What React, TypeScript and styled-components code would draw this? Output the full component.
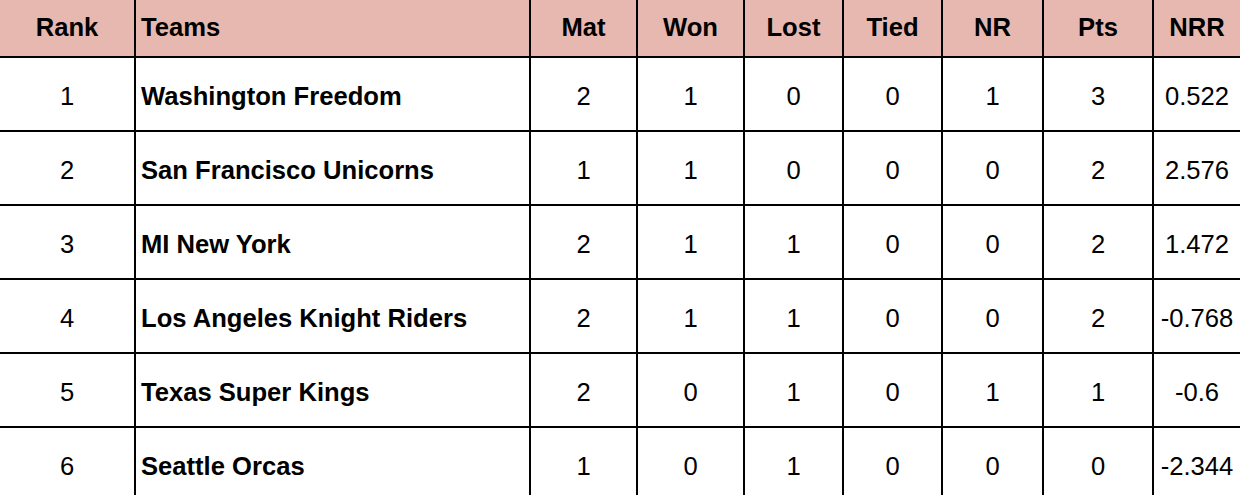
import React from "react";
import styled, { createGlobalStyle, css } from "styled-components";

const Global = createGlobalStyle`
  html, body { margin: 0; padding: 0; background: #ffffff; }
  body { font-family: "Liberation Sans", Arial, sans-serif; color: #000; }
`;

const COLS = "136px 395px 107px 107px 99px 99px 101px 110px 86px";

const Table = styled.div`
  width: 1240px;
  height: 495px;
  overflow: hidden;
  display: grid;
  grid-template-columns: ${COLS};
  grid-auto-rows: 74px;
  grid-template-rows: 58px;
`;

const Cell = styled.div<{ $head?: boolean; $left?: boolean; $last?: boolean; $bold?: boolean }>`
  box-sizing: border-box;
  display: flex;
  align-items: center;
  justify-content: ${(p) => (p.$left ? "flex-start" : "center")};
  padding: ${(p) => (p.$left ? "5px 0 0 5px" : "5px 0 0 0")};
  border-right: ${(p) => (p.$last ? "none" : "2px solid #000")};
  border-bottom: 2px solid #000;
  font-size: 25.6px;
  font-weight: ${(p) => (p.$bold ? 700 : 400)};
  white-space: nowrap;
  ${(p) =>
    p.$head &&
    css`
      background: #e6b8af;
      font-weight: 700;
      padding-top: 0;
      padding-bottom: 1px;
    `}
`;

const headers = ["Rank", "Teams", "Mat", "Won", "Lost", "Tied", "NR", "Pts", "NRR"];

const rows: (string | number)[][] = [
  [1, "Washington Freedom", 2, 1, 0, 0, 1, 3, "0.522"],
  [2, "San Francisco Unicorns", 1, 1, 0, 0, 0, 2, "2.576"],
  [3, "MI New York", 2, 1, 1, 0, 0, 2, "1.472"],
  [4, "Los Angeles Knight Riders", 2, 1, 1, 0, 0, 2, "-0.768"],
  [5, "Texas Super Kings", 2, 0, 1, 0, 1, 1, "-0.6"],
  [6, "Seattle Orcas", 1, 0, 1, 0, 0, 0, "-2.344"],
];

export default function App() {
  return (
    <>
      <Global />
      <Table>
        {headers.map((h, i) => (
          <Cell key={h} $head $left={i === 1} $last={i === headers.length - 1}>
            {h}
          </Cell>
        ))}
        {rows.map((r, ri) =>
          r.map((v, ci) => (
            <Cell
              key={`${ri}-${ci}`}
              $left={ci === 1}
              $bold={ci === 1}
              $last={ci === r.length - 1}
            >
              {v}
            </Cell>
          ))
        )}
      </Table>
    </>
  );
}
